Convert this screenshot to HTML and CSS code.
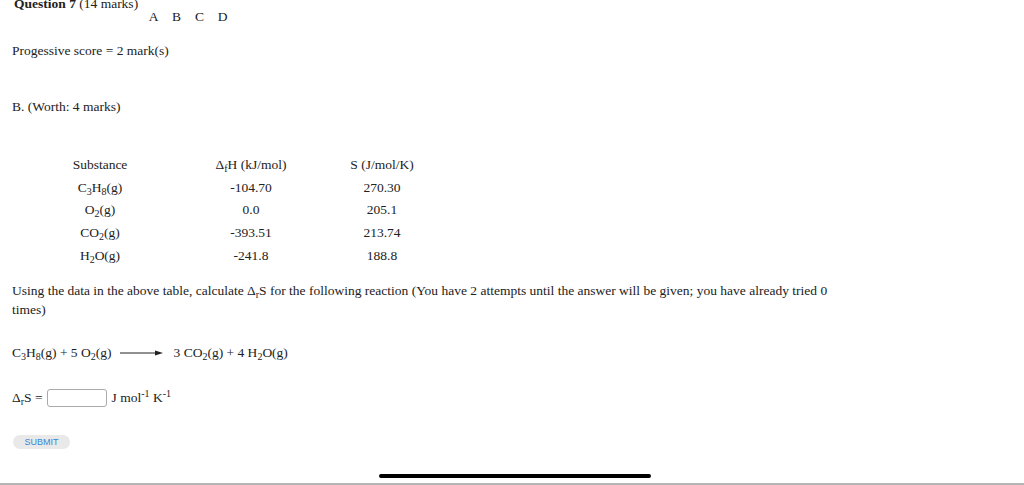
FILE: index.html
```html
<!DOCTYPE html>
<html>
<head>
<meta charset="utf-8">
<link rel="stylesheet" href="styles.css">
</head>
<body>
<div class="page">
  <div class="qhead">
    <div class="qtitle"><b>Question 7</b> (14 marks)</div>
    <div class="options">
      <div class="opt"><span class="radio"></span><span class="olabel">A</span></div>
      <div class="opt"><span class="radio"></span><span class="olabel">B</span></div>
      <div class="opt"><span class="radio"></span><span class="olabel">C</span></div>
      <div class="opt"><span class="radio"></span><span class="olabel">D</span></div>
    </div>
  </div>

  <p class="score">Progessive score = 2 mark(s)</p>

  <p class="worth">B. (Worth: 4 marks)</p>

  <table class="data">
    <tr><td class="c1">Substance</td><td class="c2">&Delta;<sub class="s">f</sub>H (kJ/mol)</td><td class="c3">S (J/mol/K)</td></tr>
    <tr><td class="c1">C<sub class="s">3</sub>H<sub class="s">8</sub>(g)</td><td class="c2">-104.70</td><td class="c3">270.30</td></tr>
    <tr><td class="c1">O<sub class="s">2</sub>(g)</td><td class="c2">0.0</td><td class="c3">205.1</td></tr>
    <tr><td class="c1">CO<sub class="s">2</sub>(g)</td><td class="c2">-393.51</td><td class="c3">213.74</td></tr>
    <tr><td class="c1">H<sub class="s">2</sub>O(g)</td><td class="c2">-241.8</td><td class="c3">188.8</td></tr>
  </table>

  <p class="para">Using the data in the above table, calculate &Delta;<sub class="s">r</sub>S for the following reaction (You have 2 attempts until the answer will be given; you have already tried 0 times)</p>

  <div class="eq">
    <span>C<sub class="s">3</sub>H<sub class="s">8</sub>(g) + 5 O<sub class="s">2</sub>(g)</span>
    <svg class="arrow" width="44" height="8" viewBox="0 0 44 8"><line x1="0" y1="4" x2="37" y2="4" stroke="#222" stroke-width="1"/><polygon points="35,1.5 43,4 35,6.5" fill="#222"/></svg>
    <span>3 CO<sub class="s">2</sub>(g) + 4 H<sub class="s">2</sub>O(g)</span>
  </div>

  <div class="answer">
    <span>&Delta;<sub class="s">r</sub>S =</span>
    <input class="box" type="text">
    <span>J mol<sup class="p">-1</sup> K<sup class="p">-1</sup></span>
  </div>

  <button class="submit">SUBMIT</button>
</div>
<div class="home"></div>
<div class="edge"></div>
</body>
</html>
```

FILE: styles.css
```css
html, body {
  margin: 0;
  padding: 0;
  background: #fff;
  overflow: hidden;
}
body {
  font-family: "Liberation Serif", "Times New Roman", serif;
  font-size: 13.5px;
  line-height: 19px;
  color: #222;
  height: 485px;
}
.page {
  padding-left: 12px;
}
.qhead {
  display: flex;
  align-items: flex-start;
  margin-top: -6px;
}
.qtitle {
  margin-left: 2px;
  white-space: nowrap;
}
.options {
  display: flex;
  margin-top: -6px;
  margin-left: 4px;
}
.opt {
  width: 23px;
  display: flex;
  flex-direction: column;
  align-items: center;
}
.radio {
  width: 12px;
  height: 12px;
  border: 1px solid #cfcfcf;
  border-radius: 50%;
  margin-bottom: 10px;
  box-sizing: border-box;
}
.olabel {
  line-height: 14px;
}
.score {
  margin: 17px 0 0 0;
}
.worth {
  margin: 37px 0 0 0;
}
.data {
  border-collapse: collapse;
  margin: 37px 0 0 18px;
  table-layout: fixed;
}
.data td {
  height: 22.7px;
  padding: 0;
  text-align: center;
  line-height: 19px;
}
.data .c1 { width: 140px; }
.data .c2 { width: 162px; }
.data .c3 { width: 100px; }
.s {
  font-size: 10px;
  line-height: 0;
  vertical-align: -3px;
}
.p {
  font-size: 10px;
  line-height: 0;
  vertical-align: 5px;
}
.para {
  margin: 15px 0 0 0;
  max-width: 830px;
}
.eq {
  margin-top: 24px;
  display: flex;
  align-items: center;
}
.arrow {
  margin: 0 10px 0 8px;
}
.answer {
  margin-top: 26px;
  display: flex;
  align-items: center;
  height: 19px;
}
.box {
  width: 60px;
  height: 18px;
  box-sizing: border-box;
  border: 1px solid #aaa;
  border-radius: 3px;
  margin: 0 5px 0 4px;
  padding: 0;
}
.submit {
  display: block;
  margin-top: 28px;
  margin-left: 1px;
  width: 57px;
  height: 14px;
  padding: 0;
  border: none;
  border-radius: 7px;
  background: #e9e9e9;
  color: #3a86d8;
  font-family: "Liberation Sans", Arial, sans-serif;
  font-size: 9px;
  line-height: 14px;
  text-align: center;
}
.home {
  position: fixed;
  left: 379px;
  top: 474px;
  width: 272px;
  height: 4px;
  border-radius: 2px;
  background: #000;
}
.edge {
  position: fixed;
  left: 0;
  right: 0;
  top: 483px;
  height: 2px;
  background: #b5b5b5;
}
```
